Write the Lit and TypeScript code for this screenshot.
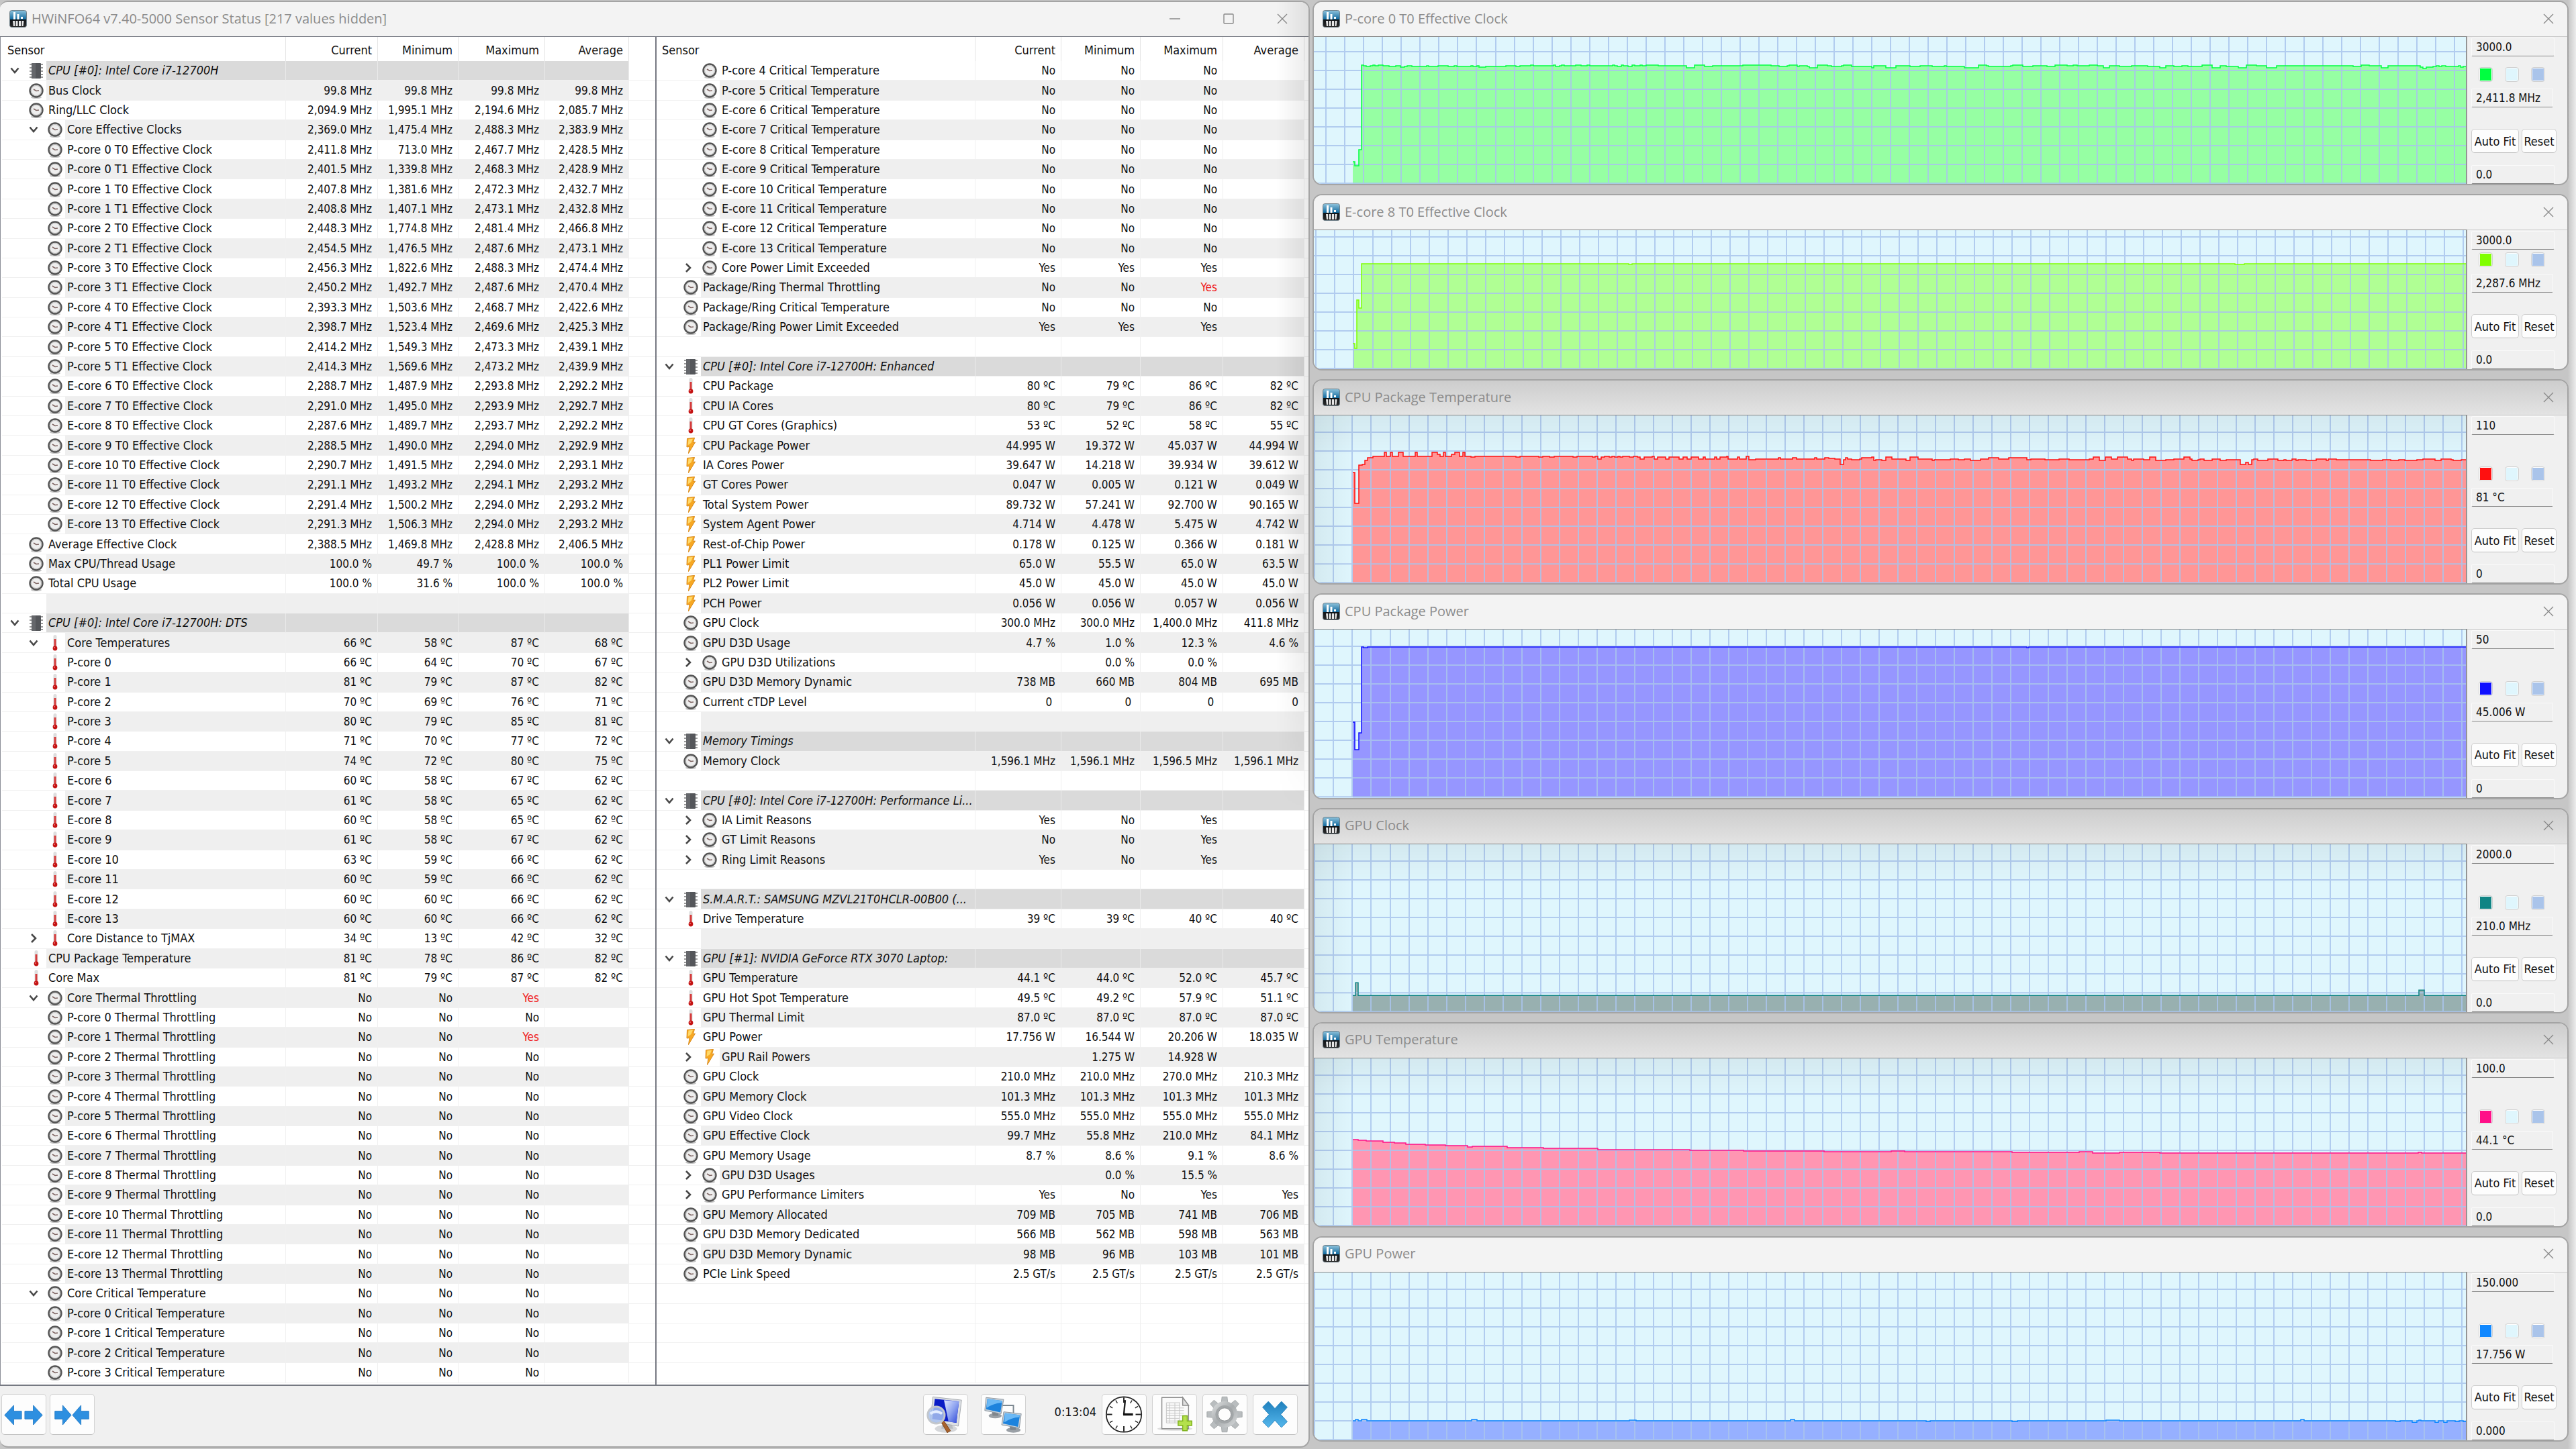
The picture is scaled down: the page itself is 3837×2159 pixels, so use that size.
import { LitElement, html, svg, css, nothing } from "lit";
import { customElement, property } from "lit/decorators.js";
import { classMap } from "lit/directives/class-map.js";

type Kind = "h" | "c" | "t" | "p" | "-";
interface Row {
  kind: Kind;
  level: number;
  arrow: string;
  name: string;
  vals: string[];
  shade: boolean;
}

/* ---------- sensor data ---------- */

/* One line per row: kind level arrow | name | current | minimum | maximum | average */
const parse = (text: string, flipFrom = Infinity): Row[] =>
  text
    .trim()
    .split("\n")
    .map((line, i) => {
      const [meta, name = "", ...vals] = line.trim().split("|");
      return {
        kind: meta[0] as Kind,
        level: Number(meta[1] ?? 1),
        arrow: meta[2] ?? "",
        name,
        vals: [0, 1, 2, 3].map((k) => vals[k] ?? ""),
        shade: i >= flipFrom ? i % 2 === 0 : i % 2 === 1,
      };
    });

const mhz = (name: string, v: string, level = 2, arrow = "") =>
  `c${level}${arrow}|${name}|` + v.split(" ").map((x) => `${x} MHz`).join("|");
const deg = (name: string, v: string, level = 2, arrow = "") =>
  `t${level}${arrow}|${name}|` + v.split(" ").map((x) => `${x} ºC`).join("|");
const watt = (name: string, v: string) =>
  `p1|${name}|` + v.split(" ").map((x) => `${x} W`).join("|");
const cores = [0, 1, 2, 3, 4, 5, 6, 7, 8, 9, 10, 11, 12, 13].map(
  (n) => `${n < 6 ? "P" : "E"}-core ${n}`
);

const clockValues = [
  "2,411.8 713.0 2,467.7 2,428.5",
  "2,401.5 1,339.8 2,468.3 2,428.9",
  "2,407.8 1,381.6 2,472.3 2,432.7",
  "2,408.8 1,407.1 2,473.1 2,432.8",
  "2,448.3 1,774.8 2,481.4 2,466.8",
  "2,454.5 1,476.5 2,487.6 2,473.1",
  "2,456.3 1,822.6 2,488.3 2,474.4",
  "2,450.2 1,492.7 2,487.6 2,470.4",
  "2,393.3 1,503.6 2,468.7 2,422.6",
  "2,398.7 1,523.4 2,469.6 2,425.3",
  "2,414.2 1,549.3 2,473.3 2,439.1",
  "2,414.3 1,569.6 2,473.2 2,439.9",
  "2,288.7 1,487.9 2,293.8 2,292.2",
  "2,291.0 1,495.0 2,293.9 2,292.7",
  "2,287.6 1,489.7 2,293.7 2,292.2",
  "2,288.5 1,490.0 2,294.0 2,292.9",
  "2,290.7 1,491.5 2,294.0 2,293.1",
  "2,291.1 1,493.2 2,294.1 2,293.2",
  "2,291.4 1,500.2 2,294.0 2,293.2",
  "2,291.3 1,506.3 2,294.0 2,293.2",
];
const clockNames = cores.flatMap((c, i) =>
  i < 6 ? [`${c} T0 Effective Clock`, `${c} T1 Effective Clock`] : [`${c} T0 Effective Clock`]
);
const tempValues = [
  "66 64 70 67", "81 79 87 82", "70 69 76 71", "80 79 85 81", "71 70 77 72",
  "74 72 80 75", "60 58 67 62", "61 58 65 62", "60 58 65 62", "61 58 67 62",
  "63 59 66 62", "60 59 66 62", "60 60 66 62", "60 60 66 62",
];

const LEFT = parse(
  [
    "h0v|CPU [#0]: Intel Core i7-12700H",
    mhz("Bus Clock", "99.8 99.8 99.8 99.8", 1),
    mhz("Ring/LLC Clock", "2,094.9 1,995.1 2,194.6 2,085.7", 1),
    mhz("Core Effective Clocks", "2,369.0 1,475.4 2,488.3 2,383.9", 2, "v"),
    ...clockNames.map((n, i) => mhz(n, clockValues[i])),
    mhz("Average Effective Clock", "2,388.5 1,469.8 2,428.8 2,406.5", 1),
    "c1|Max CPU/Thread Usage|100.0 %|49.7 %|100.0 %|100.0 %",
    "c1|Total CPU Usage|100.0 %|31.6 %|100.0 %|100.0 %",
    "-1",
    "h0v|CPU [#0]: Intel Core i7-12700H: DTS",
    deg("Core Temperatures", "66 58 87 68", 2, "v"),
    ...cores.map((n, i) => deg(n, tempValues[i])),
    deg("Core Distance to TjMAX", "34 13 42 32", 2, ">"),
    deg("CPU Package Temperature", "81 78 86 82", 1),
    deg("Core Max", "81 79 87 82", 1),
    "c2v|Core Thermal Throttling|No|No|!Yes",
    ...cores.map((n, i) => `c2|${n} Thermal Throttling|No|No|${i === 1 ? "!Yes" : "No"}`),
    "c2v|Core Critical Temperature|No|No|No",
    ...cores.slice(0, 4).map((n) => `c2|${n} Critical Temperature|No|No|No`),
  ].join("\n")
);

const RIGHT = parse(
  [
    ...cores.slice(4).map((n) => `c2|${n} Critical Temperature|No|No|No`),
    "c2>|Core Power Limit Exceeded|Yes|Yes|Yes",
    "c1|Package/Ring Thermal Throttling|No|No|!Yes",
    "c1|Package/Ring Critical Temperature|No|No|No",
    "c1|Package/Ring Power Limit Exceeded|Yes|Yes|Yes",
    "-1",
    "h0v|CPU [#0]: Intel Core i7-12700H: Enhanced",
    deg("CPU Package", "80 79 86 82", 1),
    deg("CPU IA Cores", "80 79 86 82", 1),
    deg("CPU GT Cores (Graphics)", "53 52 58 55", 1),
    watt("CPU Package Power", "44.995 19.372 45.037 44.994"),
    watt("IA Cores Power", "39.647 14.218 39.934 39.612"),
    watt("GT Cores Power", "0.047 0.005 0.121 0.049"),
    watt("Total System Power", "89.732 57.241 92.700 90.165"),
    watt("System Agent Power", "4.714 4.478 5.475 4.742"),
    watt("Rest-of-Chip Power", "0.178 0.125 0.366 0.181"),
    watt("PL1 Power Limit", "65.0 55.5 65.0 63.5"),
    watt("PL2 Power Limit", "45.0 45.0 45.0 45.0"),
    watt("PCH Power", "0.056 0.056 0.057 0.056"),
    mhz("GPU Clock", "300.0 300.0 1,400.0 411.8", 1),
    "c1|GPU D3D Usage|4.7 %|1.0 %|12.3 %|4.6 %",
    "c2>|GPU D3D Utilizations||0.0 %|0.0 %|",
    "c1|GPU D3D Memory Dynamic|738 MB|660 MB|804 MB|695 MB",
    "c1|Current cTDP Level|0 |0 |0 |0 ",
    "-1",
    "h0v|Memory Timings",
    mhz("Memory Clock", "1,596.1 1,596.1 1,596.5 1,596.1", 1),
    "-1",
    "h0v|CPU [#0]: Intel Core i7-12700H: Performance Li...",
    "c2>|IA Limit Reasons|Yes|No|Yes",
    "c2>|GT Limit Reasons|No|No|Yes",
    "c2>|Ring Limit Reasons|Yes|No|Yes",
    "-1",
    "h0v|S.M.A.R.T.: SAMSUNG MZVL21T0HCLR-00B00 (...",
    deg("Drive Temperature", "39 39 40 40", 1),
    "-1",
    "h0v|GPU [#1]: NVIDIA GeForce RTX 3070 Laptop:",
    deg("GPU Temperature", "44.1 44.0 52.0 45.7", 1),
    deg("GPU Hot Spot Temperature", "49.5 49.2 57.9 51.1", 1),
    deg("GPU Thermal Limit", "87.0 87.0 87.0 87.0", 1),
    watt("GPU Power", "17.756 16.544 20.206 18.035"),
    "p2>|GPU Rail Powers||1.275 W|14.928 W|",
    mhz("GPU Clock", "210.0 210.0 270.0 210.3", 1),
    mhz("GPU Memory Clock", "101.3 101.3 101.3 101.3", 1),
    mhz("GPU Video Clock", "555.0 555.0 555.0 555.0", 1),
    mhz("GPU Effective Clock", "99.7 55.8 210.0 84.1", 1),
    "c1|GPU Memory Usage|8.7 %|8.6 %|9.1 %|8.6 %",
    "c2>|GPU D3D Usages||0.0 %|15.5 %|",
    "c2>|GPU Performance Limiters|Yes|No|Yes|Yes",
    "c1|GPU Memory Allocated|709 MB|705 MB|741 MB|706 MB",
    "c1|GPU D3D Memory Dedicated|566 MB|562 MB|598 MB|563 MB",
    "c1|GPU D3D Memory Dynamic|98 MB|96 MB|103 MB|101 MB",
    "c1|PCIe Link Speed|2.5 GT/s|2.5 GT/s|2.5 GT/s|2.5 GT/s",
    "-0", "-0", "-0", "-0", "-0",
  ].join("\n"),
  40
);

/* ---------- icons ---------- */

const logoIcon = html`<svg class="logo" viewBox="0 0 26 26" aria-hidden="true">
  <defs>
    <linearGradient id="lg" x1="0" y1="0" x2="0" y2="1">
      <stop offset="0" stop-color="#8fc3dc" /><stop offset="0.54" stop-color="#10699e" />
      <stop offset="0.56" stop-color="#101418" /><stop offset="1" stop-color="#2b2b2b" />
    </linearGradient>
  </defs>
  <rect x="0.5" y="0.5" width="25" height="25" rx="3" fill="url(#lg)" stroke="#6f7f88" />
  <path d="M6 3h3v11H6zM11.500 6h3v8h-3zM17 10h3v3h-3z" fill="#fff" />
  <path d="M5 16h3v8H6zM9.500 16h3v8h-3zM14 16h3v8h-3zM18.500 16h3l-1 8h-2z" fill="#e8e8e8" />
</svg>`;

const closeIcon = html`<svg viewBox="0 0 16 16" width="16" height="16" aria-hidden="true">
  <path d="M1 1l14 14M15 1L1 15" stroke="#8a8a8a" stroke-width="1.400" />
</svg>`;

const rowIcon = (kind: Kind) => {
  if (kind === "h")
    return html`<svg viewBox="0 0 22 24" width="22" height="24" aria-hidden="true">
      <path d="M1 3h20M1 8h20M1 13h20M1 18h20M1 22h20" stroke="#9a9a9a" stroke-width="2" />
      <rect x="4" y="1" width="14" height="23" rx="1" fill="#54565a" />
      <path d="M4 1h6v23H4z" fill="#65676b" />
    </svg>`;
  if (kind === "c")
    return html`<svg viewBox="0 0 22 24" width="22" height="24" aria-hidden="true">
      <ellipse cx="11" cy="22" rx="8" ry="2" fill="#c4c4c4" />
      <circle cx="11" cy="12" r="9.500" fill="#e9e9e9" stroke="#545454" stroke-width="2.400" />
      <circle cx="11" cy="12" r="7.500" fill="#eee" stroke="#bdbdbd" />
      <path d="M7 10l4 2.500 4-.5" stroke="#7d6360" stroke-width="1.500" fill="none" />
    </svg>`;
  if (kind === "t")
    return html`<svg viewBox="0 0 22 24" width="22" height="24" aria-hidden="true">
      <rect x="8.500" y="0" width="5" height="20" rx="2.500" fill="#dedede" />
      <rect x="9.500" y="6" width="3" height="14" fill="#d43b3b" />
      <circle cx="11" cy="20" r="3.400" fill="#c41414" />
      <circle cx="10" cy="19" r="1" fill="#ec7777" />
    </svg>`;
  if (kind === "p")
    return html`<svg viewBox="0 0 22 24" width="22" height="24" aria-hidden="true">
      <path d="M5.500 1.500L16.500 0.500l-2 7 3-.5L7.500 23.500l1.500-10-4 .5z" fill="#f7a823" stroke="#d98a1c" />
      <path d="M7.500 2.500l6.500-.8-2.500 6.300-5 3.500z" fill="#ffd969" />
    </svg>`;
  return html`<svg width="22" height="24" aria-hidden="true"></svg>`;
};

const chevron = (dir: string) => html`<svg viewBox="0 0 16 16" width="16" height="16" aria-hidden="true">
  <path d=${dir === "v" ? "M2.500 4.500L8 11l5.500-6.500" : "M5 2l6 6-6 6"} fill="none" stroke="#484848" stroke-width="2.600" />
</svg>`;

/* ---------- sensor table ---------- */

@customElement("sensor-table")
export class SensorTable extends LitElement {
  @property({ attribute: false }) rows: Row[] = [];
  @property() label = "";

  static styles = css`
    :host {
      display: block;
      min-width: 0;
      color: #101010;
      background: #fff;
    }
    table {
      width: 100%;
      height: 100%;
      border-spacing: 0;
      table-layout: fixed;
    }
    th {
      height: 36px;
      padding: 3px 8px 0 0;
      font-weight: 400;
      font-size: 18px;
      text-align: right;
      line-height: 20px;
      border-right: 1px solid #e4e4e4;
      box-sizing: border-box;
    }
    th.first {
      text-align: left;
      padding-left: 8px;
    }
    th.fill,
    td.fill {
      border-right: 0;
      padding: 0;
    }
    .cur { width: var(--w-cur); }
    .min { width: var(--w-min); }
    .max { width: var(--w-max); }
    .avg { width: var(--w-avg); }
    .fill { width: var(--w-fill); }
    td {
      padding: 0 8px 0 0;
      text-align: right;
      white-space: pre;
      line-height: 24px;
      border-right: 1px solid #f0f0f0;
      border-bottom: 1px solid #f0f0f0;
      background: var(--cell, #fff);
    }
    td.fill {
      background: #fff;
    }
    .shade {
      --cell: #efefef;
    }
    .head {
      --cell: #dadada;
    }
    .head td {
      border-right-color: #eaeaea;
    }
    td.name {
      text-align: left;
      padding: 0;
      white-space: nowrap;
      font-size: 18px;
      background: linear-gradient(to right, #fff 66px, var(--cell, #fff) 66px);
    }
    td.l2 {
      background: linear-gradient(to right, #fff 94px, var(--cell, #fff) 94px);
    }
    .node {
      display: flex;
      align-items: center;
      height: 24px;
      padding-left: 11px;
    }
    .l2 .node {
      padding-left: 39px;
    }
    .toggle {
      display: flex;
      width: 16px;
      height: 16px;
      margin: 0 13px 0 0;
      padding: 0;
      border: 0;
      background: none;
    }
    .spacer {
      width: 29px;
    }
    .label {
      padding-left: 7px;
    }
    .head .label {
      font-style: italic;
    }
    .hot {
      color: #f01818;
    }
    svg {
      display: block;
      flex: none;
    }
  `;

  private renderRow(r: Row) {
    return html`<tr class=${classMap({ head: r.kind === "h", shade: r.kind !== "h" && r.shade && r.level !== 0 })}>
      <td class=${classMap({ name: true, l2: r.level === 2 })}>
        <div class="node">
          ${r.arrow
            ? html`<button class="toggle" aria-label=${`Toggle ${r.name}`}>${chevron(r.arrow)}</button>`
            : html`<span class="spacer"></span>`}${rowIcon(r.kind)}<span class="label">${r.name}</span>
        </div>
      </td>
      ${r.vals.map((v) =>
        v[0] === "!" ? html`<td class="hot">${v.slice(1)}</td>` : html`<td>${v || nothing}</td>`
      )}
      <td class="fill"></td>
    </tr>`;
  }

  render() {
    return html`<table aria-label=${this.label}>
      <thead>
        <tr>
          <th class="first">Sensor</th>
          <th class="cur">Current</th>
          <th class="min">Minimum</th>
          <th class="max">Maximum</th>
          <th class="avg">Average</th>
          <th class="fill"></th>
        </tr>
      </thead>
      <tbody>
        ${this.rows.map((r) => this.renderRow(r))}
      </tbody>
    </table>`;
  }
}

/* ---------- graphs ---------- */

type Pt = [number, number];
interface Graph {
  title: string;
  max: string;
  value: string;
  min: string;
  line: string;
  fill: string;
  h: number;
  gridX: number;
  jumpAfter: number;
  dim: boolean;
  pts: Pt[];
}

const CHART_W = 1716;

/* Deterministic jitter: each step holds one of the offsets for a few samples */
const jitter = (from: number, to: number, base: (x: number) => number, offsets: number[], hold: number, seed: number): Pt[] => {
  const out: Pt[] = [];
  let s = seed;
  const next = () => (s = (s * 16807) % 2147483647) / 2147483647;
  for (let x = from; x < to; ) {
    out.push([x, base(x) + offsets[Math.floor(next() * offsets.length)]]);
    x += 3 * (1 + Math.floor(next() * hold));
  }
  return out;
};

const GRAPHS: Graph[] = [
  {
    title: "P-core 0 T0 Effective Clock", max: "3000.0", value: "2,411.8 MHz", min: "0.0",
    line: "#00ff40", fill: "#96ffa3", h: 219, gridX: 18, jumpAfter: 8, dim: false,
    pts: [
      [58, 186], [61, 192], [67, 168], [71, 42], [74, 43], [78, 44], [84, 43], [88, 42], [91, 43], [96, 42], [103, 43],
      [112, 44], [122, 43], [129, 45], [135, 44], [139, 43], [146, 44], [168, 43], [171, 44], [185, 43], [200, 44],
      [209, 43], [213, 44], [234, 43], [237, 44], [243, 43], [246, 45], [256, 44], [286, 43], [301, 44], [307, 43],
      [323, 42], [327, 43], [357, 42], [360, 44], [366, 43], [369, 42], [373, 43], [390, 42], [398, 43], [407, 42],
      [411, 43], [445, 42], [448, 43], [452, 44], [458, 42], [461, 43], [468, 44], [474, 42], [478, 43],
      ...jitter(486, 1600, () => 43, [-1, 0, 0, 0, 0, 1, 1, 3], 6, 77),
      [1600, 43], [1648, 45], [1652, 47], [1657, 45], [1667, 44], [1672, 43], [1676, 44], [1680, 43], [1686, 44], [1705, 43], [1708, 45], [1712, 44],
    ],
  },
  {
    title: "E-core 8 T0 Effective Clock", max: "3000.0", value: "2,287.6 MHz", min: "0.0",
    line: "#80ff00", fill: "#b0ff94", h: 207, gridX: 3, jumpAfter: 2, dim: false,
    pts: [[58, 169], [61, 176], [64, 104], [67, 116], [71, 50], [469, 51], [474, 50], [1372, 51], [1386, 50]],
  },
  {
    title: "CPU Package Temperature", max: "110", value: "81 °C", min: "0",
    line: "#ff1010", fill: "#ff9696", h: 250, gridX: 1, jumpAfter: 3, dim: true,
    pts: [
      [58, 85], [61, 131], [67, 74], [72, 73], [76, 67], [80, 63], [88, 61], [105, 55], [108, 61], [114, 55], [117, 61],
      [126, 55], [133, 61], [151, 55], [154, 61], [176, 55], [184, 58], [188, 61], [193, 55], [196, 61], [205, 58],
      [210, 55], [217, 61], [222, 55], [225, 61], [234, 62], [240, 61], [301, 62], [307, 61], [335, 62], [341, 61],
      [351, 62], [358, 61], [386, 62], [392, 61], [415, 62], [419, 61], [423, 65], [428, 62], [433, 61], [440, 62],
      [444, 61], [448, 62], [453, 61], [456, 62], [460, 61], [470, 62], [476, 61], [482, 62], [486, 65], [492, 62],
      [504, 61], [507, 65], [512, 62], [524, 65], [529, 62], [544, 65], [550, 62], [556, 65], [562, 62], [573, 65],
      [580, 62], [583, 65], [597, 62], [600, 65], [605, 62], [615, 61], [617, 65], [631, 62], [634, 65], [644, 61],
      [648, 66], [658, 65],
      ...jitter(692, 780, () => 64, [-1, -1, 1, 0, 1, -2], 4, 9),
      [784, 73], [789, 66],
      ...jitter(792, 1315, () => 65, [-2, 0, 0, 0, 1, 1, 2, -3], 5, 31),
      [1317, 66],
      ...jitter(1320, 1378, () => 66, [-1, 0, 1], 5, 17),
      [1380, 73], [1388, 70], [1392, 73], [1397, 66],
      ...jitter(1400, 1716, () => 66, [-1, 0, 0, 1, 1], 5, 131),
    ],
  },
  {
    title: "CPU Package Power", max: "50", value: "45.006 W", min: "0",
    line: "#1010ff", fill: "#9696ff", h: 250, gridX: 1, jumpAfter: 3, dim: false,
    pts: [[58, 138], [61, 179], [67, 154], [71, 26], [74, 27], [80, 26], [1062, 27], [1065, 26]],
  },
  {
    title: "GPU Clock", max: "2000.0", value: "210.0 MHz", min: "0.0",
    line: "#108484", fill: "#98b0b0", h: 250, gridX: 1, jumpAfter: 3, dim: true,
    pts: [[58, 225], [62, 206], [66, 225], [1646, 217], [1654, 225]],
  },
  {
    title: "GPU Temperature", max: "100.0", value: "44.1 °C", min: "0.0",
    line: "#ff1088", fill: "#ff96b2", h: 250, gridX: 1, jumpAfter: 3, dim: true,
    pts: [
      [58, 121], [66, 122], [78, 123], [103, 125], [120, 126], [137, 128], [166, 129], [196, 130], [229, 132], [236, 131],
      [288, 133], [342, 134], [423, 136], [560, 137], [640, 138], [700, 138], [760, 139], [860, 138], [880, 139],
      [960, 139], [1040, 140], [1140, 139], [1160, 141], [1200, 140], [1260, 141], [1645, 140], [1650, 141],
    ],
  },
  {
    title: "GPU Power", max: "150.000", value: "17.756 W", min: "0.000",
    line: "#1088ff", fill: "#96b0ff", h: 250, gridX: 1, jumpAfter: 3, dim: false,
    pts: [
      [58, 221], [62, 219], [66, 221], [71, 219], [79, 221], [235, 219], [243, 221], [470, 220], [480, 221], [710, 219],
      [716, 221], [912, 222], [918, 221], [1040, 222], [1048, 221], [1180, 220], [1200, 221], [1470, 219], [1475, 221],
      [1611, 222], [1618, 221], [1636, 223], [1643, 221], [1646, 220], [1649, 221], [1670, 223], [1675, 221],
      [1683, 223], [1688, 221], [1700, 222], [1706, 221], [1712, 222],
    ],
  },
];

@customElement("graph-window")
export class GraphWindow extends LitElement {
  @property({ attribute: false }) graph!: Graph;

  static styles = css`
    :host {
      display: grid;
      grid-template-rows: 51px 1fr;
      position: relative;
      min-height: 0;
      min-width: 0;
      border: 2px solid #a4a4a4;
      border-radius: 14px;
      overflow: hidden;
      background: #f0f0f0;
      box-sizing: border-box;
    }
    header {
      display: flex;
      align-items: center;
      gap: 7px;
      padding: 0 20px 2px 13px;
      background: #f3f3f3;
    }
    header.dim {
      background: linear-gradient(#cdcdcd, #e3e3e3);
    }
    .logo {
      width: 26px;
      height: 26px;
    }
    h2 {
      flex: 1;
      margin: 0;
      font: 400 20px/28px "Open Sans", "Noto Sans", sans-serif;
      color: #8b8b8b;
    }
    .close {
      display: flex;
      padding: 0;
      border: 0;
      background: none;
    }
    .body {
      display: grid;
      grid-template-columns: 1fr 149px;
      min-height: 0;
    }
    .chart {
      position: relative;
      min-width: 0;
      min-height: 0;
      border-top: 1px solid #858585;
      border-right: 2px solid #959595;
      background: #dff6fd;
      overflow: hidden;
    }
    .chart svg {
      display: block;
      position: absolute;
      width: 100%;
      height: 100%;
    }
    .chart.dim::after {
      content: "";
      position: absolute;
      inset: 0;
      background: linear-gradient(rgba(0, 0, 0, 0.05), transparent 60px),
        linear-gradient(to right, rgba(0, 0, 0, 0.05), transparent 60px);
    }
    .side {
      display: flex;
      flex-direction: column;
      align-items: flex-start;
      padding: 1px 0 0 6px;
      border-top: 1px solid #c8c8c8;
      min-height: 0;
    }
    input {
      width: 124px;
      height: 28px;
      box-sizing: border-box;
      padding: 0 0 0 6px;
      border: 1px solid #fafafa;
      border-bottom: 1px solid #868686;
      border-radius: 2px;
      background: transparent;
      color: #101010;
      font: inherit;
      line-height: 24px;
    }
    .swatches {
      display: flex;
      gap: 18px;
      margin: auto 0 10px 11px;
    }
    .swatch {
      width: 21px;
      height: 22px;
      padding: 0;
      border: 1px solid #cfcfcf;
      border-radius: 4px;
      background: #fdfdfd;
      display: grid;
      place-items: center;
    }
    .swatch span {
      width: 17px;
      height: 18px;
    }
    .back {
      background: #dff6fd;
    }
    .grid {
      background: #aac4ea;
    }
    .value {
      width: 122px;
      margin-bottom: 32px;
    }
    .actions {
      display: flex;
      gap: 4px;
      margin-bottom: 18px;
    }
    .actions button {
      height: 36px;
      width: 71px;
      padding: 0;
      border: 1px solid #cfcfcf;
      border-bottom-color: #bcbcbc;
      border-radius: 5px;
      background: #fdfdfd;
      color: #101010;
      font: inherit;
      font-size: 18px;
    }
    .actions .reset {
      width: 52px;
    }
  `;

  render() {
    const g = this.graph;
    const last = g.h;
    let d = `M${g.pts[0][0]} ${g.pts[0][1]}`;
    for (const [x, y] of g.pts.slice(1)) d += `H${x}V${y}`;
    d += `H${CHART_W}`;
    const area = `${d}V${last}H${g.pts[0][0]}Z`;
    const cols: number[] = [];
    for (let k = 0; k < 62; k++) cols.push(g.gridX + 28 * k + (k > g.jumpAfter ? 1 : 0));
    const lines: number[] = [];
    for (let y = last - 1; y > 0; y -= 28) lines.push(y);
    const gridPath = cols.map((x) => `M${x} 0V${last}`).join("") + lines.map((y) => `M0 ${y}H${CHART_W}`).join("");
    return html`
      <header class=${classMap({ dim: g.dim })}>
        ${logoIcon}
        <h2>${g.title}</h2>
        <button class="close" aria-label="Close">${closeIcon}</button>
      </header>
      <div class="body">
        <div class=${classMap({ chart: true, dim: g.dim })}>
          <svg viewBox="0 0 ${CHART_W} ${g.h}" preserveAspectRatio="none" role="img" aria-label=${g.title}>
            ${svg`<path d=${area} fill=${g.fill} />
            <path d=${gridPath} stroke="#a9c4ec" stroke-width="2" stroke-opacity="0.850" />
            <path d=${d} fill="none" stroke=${g.line} stroke-width="1.500" />`}
          </svg>
        </div>
        <div class="side">
          <input aria-label="Maximum" .value=${g.max} />
          <div class="swatches">
            <button class="swatch" aria-label="Line colour"><span style="background:${g.line}"></span></button>
            <button class="swatch" aria-label="Background colour"><span class="back"></span></button>
            <button class="swatch" aria-label="Grid colour"><span class="grid"></span></button>
          </div>
          <input class="value" aria-label="Current value" readonly .value=${g.value} />
          <div class="actions">
            <button>Auto Fit</button>
            <button class="reset">Reset</button>
          </div>
          <input aria-label="Minimum" .value=${g.min} />
        </div>
      </div>
    `;
  }
}

/* ---------- toolbar icons ---------- */

const expandIcon = html`<svg viewBox="0 0 67 60" aria-hidden="true">
  <path d="M4 31L18 16v9h12v12H18v9zM62 31L48 16v9H35v12h13v9z" fill="#2d8fe0" stroke="#2a7fc8" />
</svg>`;
const collapseIcon = html`<svg viewBox="0 0 67 60" aria-hidden="true">
  <path d="M32 31L19 16v9H7v12h12v9zM34 31L47 16v9h12v12H47v9z" fill="#2d8fe0" stroke="#2a7fc8" />
</svg>`;
const monitorIcon = html`<svg viewBox="0 0 67 60" aria-hidden="true">
  <defs>
    <linearGradient id="scr" x1="0" y1="0" x2="1" y2="1">
      <stop offset="0" stop-color="#e4eaff" /><stop offset="0.500" stop-color="#8fa4f0" /><stop offset="1" stop-color="#2a44d8" />
    </linearGradient>
  </defs>
  <ellipse cx="34" cy="52" rx="17" ry="6" fill="#d5d7da" />
  <path d="M29 42h13l3 10H27z" fill="#b9bcc0" />
  <path d="M14 3l44 5-5 40-43-7z" fill="#dcdfe3" stroke="#a5a9ae" />
  <path d="M17 6l37 4-4 33-37-6z" fill="#0a1cc6" />
  <path d="M31 8l23 2-4 33-12-2z" fill="url(#scr)" />
  <path d="M27 42l4-2 10 15-5 3z" fill="#a8622c" stroke="#7d441a" />
  <circle cx="19" cy="31" r="13" fill="#a9c2ee" fill-opacity="0.850" stroke="#c3c7cc" stroke-width="3" />
  <path d="M10 29q9-7 18 0" stroke="#e3edff" stroke-width="4" fill="none" />
</svg>`;
const networkIcon = html`<svg viewBox="0 0 67 60" aria-hidden="true">
  <path d="M32 16h17v13" fill="none" stroke="#7c8890" stroke-width="2" />
  <ellipse cx="21" cy="32" rx="10" ry="4" fill="#9aa0a6" />
  <path d="M16 24h9l1 8H17z" fill="#7f858b" />
  <path d="M7 4l27 3-4 22-25-5z" fill="#c7d0d8" stroke="#8b959e" />
  <path d="M9 6l23 3-3 18-22-5z" fill="#1d83dd" />
  <path d="M9 6l23 3-1 3q-13 1-23 8z" fill="#6cb9f5" />
  <ellipse cx="49" cy="54" rx="11" ry="4" fill="#9aa0a6" />
  <path d="M43 46h9l1 8H44z" fill="#7f858b" />
  <path d="M34 26l27 3-3 22-27-5z" fill="#c7d0d8" stroke="#8b959e" />
  <path d="M36 28l23 3-3 18-23-5z" fill="#1d83dd" />
  <path d="M36 28l23 3-1 3q-13 1-23 8z" fill="#6cb9f5" />
</svg>`;
const ticks = Array.from({ length: 12 }, (_, i) => i * 30);
const clockIcon = html`<svg viewBox="0 0 67 60" aria-hidden="true">
  <circle cx="33" cy="30" r="27" fill="#fff" stroke="#222" stroke-width="1.800" />
  ${ticks.map(
    (a) => svg`<path d=${a % 90 === 0 ? "M33 4v8" : "M33 5v5"} stroke="#222" stroke-width=${a % 90 === 0 ? 2 : 1.5} transform="rotate(${a} 33 30)" />`
  )}
  <path d="M33 30l2-22" stroke="#222" stroke-width="2.500" />
  <path d="M32 30h15" stroke="#111" stroke-width="3.500" />
</svg>`;
const reportIcon = html`<svg viewBox="0 0 67 60" aria-hidden="true">
  <ellipse cx="34" cy="52" rx="27" ry="3" fill="#dedede" />
  <path d="M14 4h32l9 12v36H14z" fill="#fafafa" stroke="#8d8d8d" stroke-width="1.500" />
  <path d="M46 4v12h9z" fill="#e0e0e0" stroke="#8d8d8d" stroke-width="1.500" />
  <path d="M21 12h21M21 16h21M21 20h27M21 24h27M21 28h27M21 32h27M21 36h20M21 40h20M21 43h20M21 12v31M26 12v31M34 12v31M41 12v31" stroke="#c6c6c6" />
  <path d="M46 32h7v8h7v7h-7v8h-7v-8h-7v-7h7z" fill="#b4e04c" stroke="#7fb21e" stroke-width="1.500" />
</svg>`;
const gearIcon = html`<svg viewBox="0 0 67 60" aria-hidden="true">
  <defs>
    <linearGradient id="gr" x1="0" y1="0" x2="1" y2="1">
      <stop offset="0" stop-color="#dfe1e2" /><stop offset="0.500" stop-color="#a8acae" /><stop offset="1" stop-color="#d9dcdd" />
    </linearGradient>
  </defs>
  ${[0, 45, 90, 135, 180, 225, 270, 315].map(
    (a) => svg`<path d="M28 13l1-10h8l1 10z" fill="#b9bdbf" stroke="#989c9e" stroke-width="0.800" transform="rotate(${a} 33 30)" />`
  )}
  <circle cx="33" cy="30" r="20" fill="url(#gr)" />
  <circle cx="33" cy="30" r="14" fill="#a2a6a8" />
  <circle cx="33" cy="30" r="10" fill="#fdfdfd" stroke="#8c9092" />
</svg>`;
const crossIcon = html`<svg viewBox="0 0 67 60" aria-hidden="true">
  <defs>
    <linearGradient id="cr" x1="0" y1="0" x2="0" y2="1">
      <stop offset="0" stop-color="#1f80bd" /><stop offset="1" stop-color="#55b7ec" />
    </linearGradient>
  </defs>
  <path d="M23 10l10 11 10-11 9 9-10 11 10 11-9 9-10-11-10 11-9-9 10-11-10-11z" fill="url(#cr)" stroke="#2a86bf" />
</svg>`;

/* ---------- application ---------- */

@customElement("app-root")
export class AppRoot extends LitElement {
  static styles = css`
    :host {
      display: grid;
      grid-template-columns: 1951fr 1871fr;
      column-gap: 4px;
      height: 100vh;
      padding: 1px 11px 0 0;
      box-sizing: border-box;
      overflow: hidden;
      background: linear-gradient(to right, #c6c6c6 calc(100% - 12px), #ececec);
      font-family: "DejaVu Sans Condensed", "DejaVu Sans", sans-serif;
      font-size: 17px;
      color: #101010;
    }
    .main {
      position: relative;
      display: grid;
      grid-template-rows: 51px 1fr 90px;
      min-height: 0;
      min-width: 0;
      margin-bottom: 2px;
      border: 2px solid #a4a4a4;
      border-left-width: 0;
      border-radius: 12px 14px 14px 12px;
      overflow: hidden;
      background: #f0f0f0;
    }
    .main::after {
      content: "";
      position: absolute;
      top: 0;
      right: 0;
      width: 48px;
      height: 56%;
      background: linear-gradient(to right, transparent, rgba(0, 0, 0, 0.08));
      mask-image: linear-gradient(#000 80%, transparent);
      pointer-events: none;
    }
    .titlebar {
      display: flex;
      align-items: center;
      gap: 7px;
      padding: 0 31px 2px 14px;
      background: #f3f3f3;
    }
    .logo {
      width: 26px;
      height: 26px;
    }
    h1 {
      flex: 1;
      margin: 0;
      font: 400 20px/28px "Open Sans", "Noto Sans", sans-serif;
      color: #8b8b8b;
    }
    .controls {
      display: flex;
      gap: 64px;
    }
    .controls button {
      display: flex;
      padding: 0;
      border: 0;
      background: none;
    }
    .lists {
      display: grid;
      grid-template-columns: 976fr 973fr;
      min-height: 0;
      border-top: 1px solid #767982;
      border-bottom: 2px solid #767982;
      background: #fff;
    }
    sensor-table {
      padding-bottom: 2px;
      min-height: 0;
    }
    .one {
      border-left: 1px solid #8a8d96;
      padding-left: 2px;
      --w-cur: 137px;
      --w-min: 120px;
      --w-max: 129px;
      --w-avg: 125px;
      --w-fill: 39px;
    }
    .two {
      border-left: 2px solid #767982;
      --w-cur: 128px;
      --w-min: 118px;
      --w-max: 123px;
      --w-avg: 121px;
      --w-fill: 6px;
    }
    .toolbar {
      display: flex;
      align-items: flex-start;
      padding: 12px 16px 0 2px;
    }
    .tool {
      display: flex;
      width: 67px;
      height: 61px;
      padding: 0;
      border: 1px solid #d2d2d2;
      border-bottom-color: #bdbdbd;
      border-radius: 5px;
      background: #fdfdfd;
      margin-right: 8px;
    }
    .tool svg {
      width: 100%;
      height: 100%;
    }
    .first {
      margin-right: 5px;
    }
    .push {
      margin-left: auto;
      margin-right: 19px;
    }
    time {
      margin: 0 8px 0 35px;
      font-size: 18px;
      line-height: 54px;
    }
    .end {
      margin-right: 0;
    }
    .graphs {
      display: grid;
      grid-template-rows: 275fr 263fr repeat(5, 306fr);
      row-gap: 13px;
      padding-bottom: 11px;
      min-height: 0;
      min-width: 0;
    }
  `;

  render() {
    return html`
      <main class="main">
        <div class="titlebar">
          ${logoIcon}
          <h1>HWiNFO64 v7.40-5000 Sensor Status [217 values hidden]</h1>
          <div class="controls">
            <button aria-label="Minimize">
              <svg viewBox="0 0 16 16" width="16" height="16" aria-hidden="true"><path d="M0 8h16" stroke="#8a8a8a" stroke-width="1.400" /></svg>
            </button>
            <button aria-label="Maximize">
              <svg viewBox="0 0 16 16" width="16" height="16" aria-hidden="true"><rect x="1" y="1" width="14" height="14" rx="1" fill="none" stroke="#8a8a8a" stroke-width="1.400" /></svg>
            </button>
            <button aria-label="Close">${closeIcon}</button>
          </div>
        </div>
        <div class="lists">
          <sensor-table class="one" label="CPU sensors" .rows=${LEFT}></sensor-table>
          <sensor-table class="two" label="Power, memory and GPU sensors" .rows=${RIGHT}></sensor-table>
        </div>
        <div class="toolbar">
          <button class="tool first" aria-label="Expand columns">${expandIcon}</button>
          <button class="tool" aria-label="Collapse columns">${collapseIcon}</button>
          <button class="tool push" aria-label="System summary">${monitorIcon}</button>
          <button class="tool" aria-label="Remote monitoring">${networkIcon}</button>
          <time>0:13:04</time>
          <button class="tool" aria-label="Reset clock">${clockIcon}</button>
          <button class="tool" aria-label="Start logging">${reportIcon}</button>
          <button class="tool" aria-label="Settings">${gearIcon}</button>
          <button class="tool end" aria-label="Close sensors">${crossIcon}</button>
        </div>
      </main>
      <section class="graphs" aria-label="Graphs">
        ${GRAPHS.map((g) => html`<graph-window .graph=${g}></graph-window>`)}
      </section>
    `;
  }
}
